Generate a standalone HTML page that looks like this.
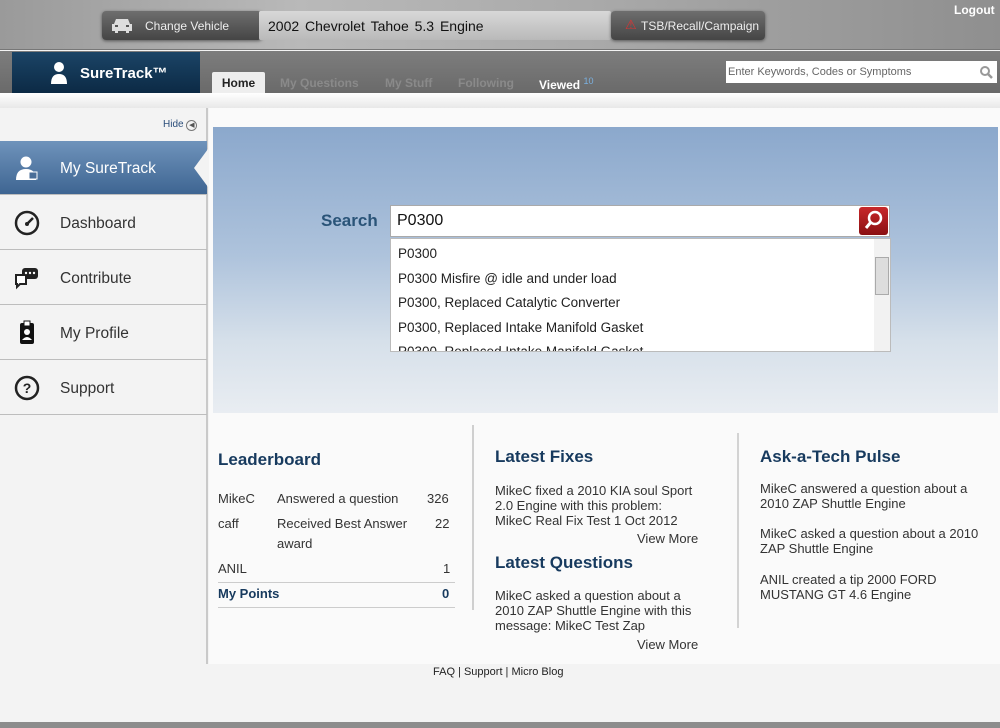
<!DOCTYPE html>
<html><head><meta charset="utf-8"><style>
*{margin:0;padding:0;box-sizing:border-box}
body{width:1000px;height:728px;overflow:hidden;font-family:"Liberation Sans",sans-serif;background:#f3f3f3;position:relative}
.abs{position:absolute}
#top{left:0;top:0;width:1000px;height:50px;background:linear-gradient(90deg,#9a9a9a,#b9b9b9 30%,#a9a9a9 60%,#8f8f8f);border-bottom:1px solid #777}
#bar2{left:0;top:51px;width:1000px;height:42px;background:linear-gradient(#7d7d7d,#6a6a6a)}
.btn{background:linear-gradient(#6e6e6e,#454545);color:#eee;font-size:12px;border-radius:4px;box-shadow:0 1px 3px rgba(0,0,0,.5)}
#logo{left:12px;top:52px;width:188px;height:41px;background:linear-gradient(#1b4466,#0c2a45);color:#fff;font-weight:bold;font-size:15px}
.tab{top:72px;height:21px;font-size:12px;font-weight:bold;color:#8a8a8a;padding-top:4px}
#side{left:0;top:108px;width:208px;height:556px;background:#f3f3f3;border-right:2px solid #c9c9c9}
.mi{position:absolute;left:0;width:207px;height:54px;border-bottom:1px solid #bdbdbd;font-size:15.5px;color:#333}
.mi span{position:absolute;left:60px;top:19px}
.mi svg{position:absolute;left:14px;top:14px}
#main{left:209px;top:108px;width:791px;height:556px;background:#fafafa}
#hero{left:213px;top:127px;width:785px;height:286px;background:linear-gradient(180deg,#8ba8cc 0%,#aec3dc 45%,#d6e0ea 75%,#e9edf2 100%)}
h2{position:absolute;font-size:17px;color:#173a5e;font-weight:bold}
.t{position:absolute;font-size:13px;color:#333;line-height:15px}
</style></head><body>
<div id="top" class="abs"></div>
<div class="abs btn" style="left:102px;top:11px;width:160px;height:29px"><svg class="abs" style="left:8px;top:6px" width="24" height="17" viewBox="0 0 24 17"><path d="M4 7 L6 2 H18 L20 7 H22 V14 H19 V16 H16 V14 H8 V16 H5 V14 H2 V7Z" fill="#ddd"/><rect x="5" y="8" width="3" height="2" fill="#555"/><rect x="16" y="8" width="3" height="2" fill="#555"/></svg><span class="abs" style="left:43px;top:8px">Change Vehicle</span></div>
<div class="abs" style="left:259px;top:11px;width:352px;height:29px;background:linear-gradient(#d8d8d8,#b9b9b9);border-radius:2px;font-size:14px;color:#111;padding:7px 9px;word-spacing:2px">2002 Chevrolet Tahoe 5.3 Engine</div>
<div class="abs btn" style="left:611px;top:11px;width:154px;height:29px"><span class="abs" style="left:14px;top:6px;color:#d33;font-size:13px">⚠</span><span class="abs" style="left:30px;top:8px">TSB/Recall/Campaign</span></div>
<div class="abs" style="left:954px;top:3px;font-size:12px;color:#fff;font-weight:bold">Logout</div>
<div id="bar2" class="abs"></div>
<div id="logo" class="abs"><svg class="abs" style="left:38px;top:9px" width="18" height="24" viewBox="0 0 18 24"><circle cx="9" cy="6" r="5" fill="#fff"/><path d="M1 23 Q1 13 9 13 Q17 13 17 23Z" fill="#fff"/></svg><span class="abs" style="left:68px;top:13px">SureTrack™</span></div>
<div class="abs tab" style="left:212px;width:53px;background:#eee;color:#222;text-align:center;border-radius:2px 2px 0 0">Home</div>
<div class="abs tab" style="left:280px">My Questions</div>
<div class="abs tab" style="left:385px">My Stuff</div>
<div class="abs tab" style="left:458px">Following</div>
<div class="abs tab" style="left:539px;color:#fff">Viewed <sup style="color:#7ab0e0;font-weight:normal;font-size:9px">10</sup></div>
<div class="abs" style="left:726px;top:61px;width:271px;height:22px;background:#fff;font-size:11px;color:#666;padding:5px 2px">Enter Keywords, Codes or Symptoms<svg class="abs" style="right:4px;top:4px" width="14" height="14" viewBox="0 0 14 14"><circle cx="6" cy="6" r="4" fill="none" stroke="#999" stroke-width="2"/><path d="M9 9 L13 13" stroke="#999" stroke-width="2.5"/></svg></div>
<div class="abs" style="left:0;top:93px;width:1000px;height:15px;background:linear-gradient(#fff,#e8e8e8)"></div>
<div id="main" class="abs"></div>
<div id="side" class="abs">
<div class="abs" style="left:163px;top:11px;font-size:10px;color:#2a4d7a">Hide <span style="display:inline-block;width:11px;height:11px;border:1px solid #777;border-radius:50%;font-size:7px;text-align:center;line-height:9px;color:#555">◀</span></div>
<div class="mi" style="top:33px;background:linear-gradient(#6f93bb,#3e6592);color:#fff"><svg width="26" height="26" viewBox="0 0 26 26"><circle cx="12" cy="7" r="5.5" fill="#fff"/><path d="M2 25 Q2 14 12 14 Q22 14 22 25Z" fill="#fff"/><rect x="15" y="17" width="8" height="7" fill="#4a6e98" stroke="#fff"/></svg><span>My SureTrack</span><div class="abs" style="right:-1px;top:8px;width:0;height:0;border-top:19px solid transparent;border-bottom:19px solid transparent;border-right:14px solid #f3f3f3"></div></div>
<div class="mi" style="top:88px"><svg width="26" height="26" viewBox="0 0 26 26"><circle cx="13" cy="13" r="11" fill="none" stroke="#222" stroke-width="2.5"/><path d="M13 14 L19 8" stroke="#222" stroke-width="2.5"/><circle cx="13" cy="14" r="2" fill="#222"/></svg><span>Dashboard</span></div>
<div class="mi" style="top:143px"><svg width="26" height="26" viewBox="0 0 26 26"><rect x="8" y="3" width="16" height="11" rx="3" fill="#222"/><path d="M2 10 H12 V19 H6 L3 22 V19 H2Z" fill="#fff" stroke="#222" stroke-width="2"/><circle cx="12" cy="8" r="1.2" fill="#fff"/><circle cx="16" cy="8" r="1.2" fill="#fff"/><circle cx="20" cy="8" r="1.2" fill="#fff"/></svg><span>Contribute</span></div>
<div class="mi" style="top:198px"><svg width="26" height="26" viewBox="0 0 26 26"><rect x="6" y="3" width="14" height="21" rx="2" fill="#111"/><rect x="10" y="1" width="6" height="5" fill="#fff" stroke="#111"/><circle cx="13" cy="12" r="3" fill="#fff"/><path d="M8 20 Q13 14 18 20Z" fill="#fff"/></svg><span>My Profile</span></div>
<div class="mi" style="top:253px"><svg width="26" height="26" viewBox="0 0 26 26"><circle cx="13" cy="13" r="11" fill="none" stroke="#222" stroke-width="2.5"/><text x="13" y="18" text-anchor="middle" font-size="14" font-weight="bold" font-family="Liberation Sans" fill="#222">?</text></svg><span>Support</span></div>
</div>
<div id="hero" class="abs"></div>
<div class="abs" style="left:321px;top:211px;font-size:17px;font-weight:bold;color:#2a5478">Search</div>
<div class="abs" style="left:390px;top:205px;width:500px;height:32px;background:#fff;border:1px solid #aaa;font-size:16px;padding:6px 6px;color:#111">P0300<div class="abs" style="right:1px;top:1px;width:29px;height:28px;background:linear-gradient(#c8282a,#8a1012);border-radius:3px"><svg width="29" height="28" viewBox="0 0 29 28"><circle cx="16" cy="11" r="6" fill="none" stroke="#fff" stroke-width="2.5"/><path d="M12 15 L7 21" stroke="#fff" stroke-width="3"/></svg></div></div>
<div class="abs" style="left:390px;top:238px;width:501px;height:114px;background:#fff;border:1px solid #bbb;overflow:hidden;font-size:14px;color:#222">
<div class="abs" style="left:7px;top:3px;font-size:13.5px;line-height:24.5px">P0300<br>P0300 Misfire @ idle and under load<br>P0300, Replaced Catalytic Converter<br>P0300, Replaced Intake Manifold Gasket<br>P0300, Replaced Intake Manifold Gasket</div>
<div class="abs" style="right:0;top:0;width:16px;height:114px;background:#f2f2f2"><div class="abs" style="left:1px;top:18px;width:14px;height:38px;background:#ddd;border:1px solid #aaa"></div></div>
</div>
<div class="abs" style="left:472px;top:425px;width:2px;height:185px;background:#cfcfcf"></div>
<div class="abs" style="left:737px;top:433px;width:2px;height:195px;background:#d3d3d3"></div>
<h2 style="left:218px;top:450px">Leaderboard</h2>
<div class="t" style="left:218px;top:491px">MikeC</div><div class="t" style="left:277px;top:491px">Answered a question</div><div class="t" style="left:427px;top:491px">326</div>
<div class="t" style="left:218px;top:516px">caff</div><div class="t" style="left:277px;top:514px;line-height:20px">Received Best Answer<br>award</div><div class="t" style="left:435px;top:516px">22</div>
<div class="t" style="left:218px;top:561px">ANIL</div><div class="t" style="left:443px;top:561px">1</div>
<div class="abs" style="left:218px;top:582px;width:237px;height:1px;background:#ccc"></div>
<div class="t" style="left:218px;top:586px;font-weight:bold;color:#173a5e">My Points</div><div class="t" style="left:442px;top:586px;font-weight:bold;color:#173a5e">0</div>
<div class="abs" style="left:218px;top:607px;width:237px;height:1px;background:#ccc"></div>
<h2 style="left:495px;top:447px">Latest Fixes</h2>
<div class="t" style="left:495px;top:483px">MikeC fixed a 2010 KIA soul Sport<br>2.0 Engine with this problem:<br>MikeC Real Fix Test 1 Oct 2012</div>
<div class="t" style="left:637px;top:531px">View More</div>
<h2 style="left:495px;top:553px">Latest Questions</h2>
<div class="t" style="left:495px;top:588px">MikeC asked a question about a<br>2010 ZAP Shuttle Engine with this<br>message: MikeC Test Zap</div>
<div class="t" style="left:637px;top:637px">View More</div>
<h2 style="left:760px;top:447px">Ask-a-Tech Pulse</h2>
<div class="t" style="left:760px;top:481px">MikeC answered a question about a<br>2010 ZAP Shuttle Engine</div>
<div class="t" style="left:760px;top:526px">MikeC asked a question about a 2010<br>ZAP Shuttle Engine</div>
<div class="t" style="left:760px;top:572px">ANIL created a tip 2000 FORD<br>MUSTANG GT 4.6 Engine</div>
<div class="abs" style="left:0;top:664px;width:1000px;height:58px;background:#f3f3f3"></div>
<div class="abs" style="left:433px;top:666px;font-size:11px;color:#222">FAQ | Support | Micro Blog</div>
<div class="abs" style="left:0;top:722px;width:1000px;height:6px;background:#8c8c8c"></div>
</body></html>
